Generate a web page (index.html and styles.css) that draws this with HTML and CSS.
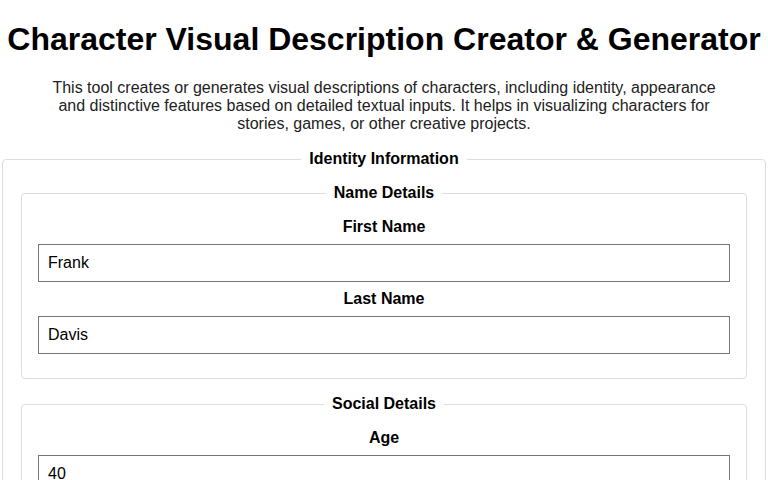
FILE: index.html
```html
<!DOCTYPE html>
<html lang="en">
<head>
<meta charset="utf-8">
<title>Character Visual Description Creator &amp; Generator</title>
<link rel="stylesheet" href="styles.css">
</head>
<body>
<h1 class="title">Character Visual Description Creator &amp; Generator</h1>
<p class="intro">This tool creates or generates visual descriptions of characters, including identity, appearance and distinctive features based on detailed textual inputs. It helps in visualizing characters for stories, games, or other creative projects.</p>
<form class="form">
  <fieldset class="group">
    <legend class="legend">Identity Information</legend>
    <fieldset class="group sub">
      <legend class="legend">Name Details</legend>
      <label class="label" for="first">First Name</label>
      <input class="field" id="first" type="text" value="Frank">
      <label class="label" for="last">Last Name</label>
      <input class="field" id="last" type="text" value="Davis">
    </fieldset>
    <fieldset class="group sub">
      <legend class="legend">Social Details</legend>
      <label class="label" for="age">Age</label>
      <input class="field" id="age" type="text" value="40">
      <label class="label" for="occ">Occupation</label>
      <input class="field" id="occ" type="text" value="Detective">
    </fieldset>
  </fieldset>
</form>
</body>
</html>
```
FILE: styles.css
```css
html, body {
  margin: 0;
  padding: 0;
  background: #fff;
  color: #000;
  font-family: "Liberation Sans", Arial, sans-serif;
  font-size: 16px;
}
.title {
  font-size: 32px;
  font-weight: bold;
  text-align: center;
  margin: 21px 0;
}
.intro {
  max-width: 680px;
  margin: 0 auto 17px;
  text-align: center;
  color: #222;
  line-height: 18px;
}
.form {
  margin: 0;
}
.group {
  margin: 0 2px 16px;
  padding: 16px;
  border: 1px solid #ddd;
  border-radius: 4px;
}
.legend {
  margin: 0 auto;
  padding: 0 8px;
  font-weight: bold;
  line-height: 18px;
}
.sub {
  margin: 0 2px 16px;
}
.label {
  display: block;
  text-align: center;
  font-weight: bold;
  line-height: 18px;
  margin-bottom: 8px;
}
.field {
  display: block;
  box-sizing: border-box;
  width: 100%;
  height: 38px;
  margin: 0 0 8px;
  padding: 0 9px;
  border: 1px solid #767676;
  border-radius: 0;
  font-family: "Liberation Sans", Arial, sans-serif;
  font-size: 16px;
  color: #000;
  background: #fff;
}
```
